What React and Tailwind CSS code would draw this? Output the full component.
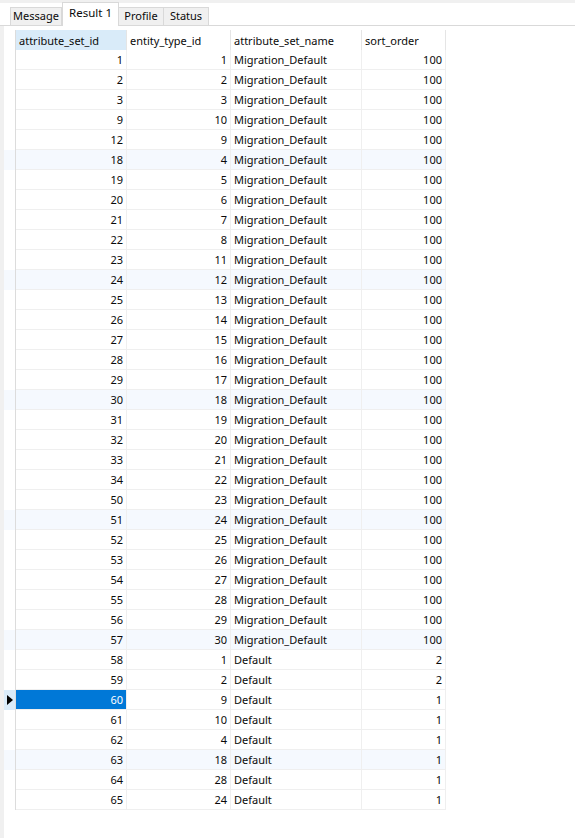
import React from "react";

const rows = [
  [1, 1, "Migration_Default", 100],
  [2, 2, "Migration_Default", 100],
  [3, 3, "Migration_Default", 100],
  [9, 10, "Migration_Default", 100],
  [12, 9, "Migration_Default", 100],
  [18, 4, "Migration_Default", 100],
  [19, 5, "Migration_Default", 100],
  [20, 6, "Migration_Default", 100],
  [21, 7, "Migration_Default", 100],
  [22, 8, "Migration_Default", 100],
  [23, 11, "Migration_Default", 100],
  [24, 12, "Migration_Default", 100],
  [25, 13, "Migration_Default", 100],
  [26, 14, "Migration_Default", 100],
  [27, 15, "Migration_Default", 100],
  [28, 16, "Migration_Default", 100],
  [29, 17, "Migration_Default", 100],
  [30, 18, "Migration_Default", 100],
  [31, 19, "Migration_Default", 100],
  [32, 20, "Migration_Default", 100],
  [33, 21, "Migration_Default", 100],
  [34, 22, "Migration_Default", 100],
  [50, 23, "Migration_Default", 100],
  [51, 24, "Migration_Default", 100],
  [52, 25, "Migration_Default", 100],
  [53, 26, "Migration_Default", 100],
  [54, 27, "Migration_Default", 100],
  [55, 28, "Migration_Default", 100],
  [56, 29, "Migration_Default", 100],
  [57, 30, "Migration_Default", 100],
  [58, 1, "Default", 2],
  [59, 2, "Default", 2],
  [60, 9, "Default", 1],
  [61, 10, "Default", 1],
  [62, 4, "Default", 1],
  [63, 18, "Default", 1],
  [64, 28, "Default", 1],
  [65, 24, "Default", 1],
];

const tabs = ["Message", "Result 1", "Profile", "Status"];
const tabWidths = ["w-[52px]", "w-[57px]", "w-[46px]", "w-[46px]"];

export default function App() {
  return (
    <div
      className="w-[575px] h-[838px] bg-white text-[11px] text-[#0a0a0a] overflow-hidden"
      style={{ fontFamily: '"Noto Sans", "Open Sans", sans-serif' }}
    >
      {/* tab strip */}
      <div className="h-[3px] bg-[#f0f0f0]" />
      <div className="h-[23px] flex items-end pl-[10px] border-b border-[#d9d9d9]">
        {tabs.map((t, i) =>
          i === 1 ? (
            <div
              key={t}
              className={`${tabWidths[i]} h-[24px] -mb-px bg-white border border-b-0 border-[#d9d9d9] flex items-center justify-center text-[11.5px] pb-[4px]`}
            >
              {t}
            </div>
          ) : (
            <div
              key={t}
              className={`${tabWidths[i]} h-[18px] bg-[#f0f0f0] border border-b-0 border-[#d9d9d9] flex items-center justify-center pb-[1px] ${i === 0 ? "" : "-ml-px"}`}
            >
              {t}
            </div>
          )
        )}
      </div>

      {/* grid */}
      <div className="flex h-[812px]">
        <div className="w-[4px] bg-[#f0f0f0]" />
        <div className="pt-[4px]">
          {/* header */}
          <div className="flex h-[20px]">
            <div className="w-[12px] border-r border-[#dcdcdc]" />
            <div className="w-[111px] bg-[#d9ebf9] border-r border-[#e5e5e5] px-[3px] pt-[2px] flex items-center">
              attribute_set_id
            </div>
            <div className="w-[104px] border-r border-[#e5e5e5] px-[3px] pt-[2px] flex items-center">
              entity_type_id
            </div>
            <div className="w-[131px] border-r border-[#e5e5e5] px-[3px] pt-[2px] flex items-center">
              attribute_set_name
            </div>
            <div className="w-[84px] border-r border-[#e5e5e5] px-[3px] pt-[2px] flex items-center">
              sort_order
            </div>
          </div>
          {rows.map((r, i) => {
            const sel = i === 32;
            const tint = i % 6 === 5 ? "bg-[#f5f9fe]" : "bg-white";
            return (
              <div key={i} className={`flex h-[20px] ${tint}`}>
                <div
                  className={`w-[12px] border-r border-[#dcdcdc] flex items-center justify-center ${sel ? "bg-[#d9ebf9]" : ""}`}
                >
                  {sel && (
                    <svg width="7" height="10" viewBox="0 0 7 10">
                      <path d="M1 0 L7 5 L1 10 Z" fill="#000" />
                    </svg>
                  )}
                </div>
                <div
                  className={`w-[111px] border-r border-b border-[#efefef] px-[3px] pt-[2px] flex items-center justify-end ${sel ? "bg-[#0078d7] text-white" : ""}`}
                >
                  {r[0]}
                </div>
                <div className="w-[104px] border-r border-b border-[#efefef] px-[3px] pt-[2px] flex items-center justify-end">
                  {r[1]}
                </div>
                <div className="w-[131px] border-r border-b border-[#efefef] px-[3px] pt-[2px] flex items-center">
                  {r[2]}
                </div>
                <div className="w-[84px] border-r border-b border-[#efefef] px-[3px] pt-[2px] flex items-center justify-end">
                  {r[3]}
                </div>
              </div>
            );
          })}
        </div>
      </div>
    </div>
  );
}
